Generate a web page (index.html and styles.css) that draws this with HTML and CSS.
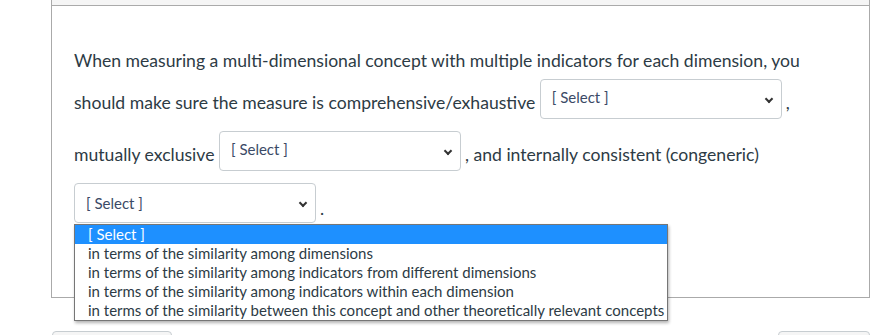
FILE: index.html
```html
<!DOCTYPE html>
<html lang="en">
<head>
    <meta charset="UTF-8">
    <title>Quiz question</title>
    <link rel="stylesheet" href="styles.css">
</head>
<body>
    <div class="question">
        <div class="question-header"></div>
        <div class="question-text">
            <p>
                When measuring a multi-dimensional concept with multiple indicators for each dimension, you<br />
                should make sure the measure is comprehensive/exhaustive
                <span class="select">[ Select ]<span class="chevron"></span></span>,<br />
                mutually exclusive
                <span class="select">[ Select ]<span class="chevron"></span></span>, and internally consistent (congeneric)<br />
                <span class="select select-open">
                    [ Select ]<span class="chevron"></span>
                    <span class="options">
                        <span class="option selected">[ Select ]</span>
                        <span class="option">in terms of the similarity among dimensions</span>
                        <span class="option">in terms of the similarity among indicators from different dimensions</span>
                        <span class="option">in terms of the similarity among indicators within each dimension</span>
                        <span class="option">in terms of the similarity between this concept and other theoretically relevant concepts</span>
                    </span>
                </span>.
            </p>
        </div>
    </div>

    <div class="nav">
        <span class="btn btn-prev"></span>
        <span class="btn btn-next"></span>
    </div>
</body>
</html>
```

FILE: styles.css
```css
body{
    margin:0;
    background:#fff;
    font-family:Lato, 'Open Sans', sans-serif;
    color:#2d3b45;
}

.question{
    margin:0 15px 0 51px;
    border:1px solid #aaa;
    border-top:none;
    height:297px;
}

.question-header{
    height:5px;
    background:#f5f5f5;
    border-bottom:1px solid #aaa;
}

.question-text{
    padding:43px 22px 0 22px;
}

.question-text p{
    margin:0;
    font-size:17.6px;
    line-height:24px;
    white-space:nowrap;
}

.select{
    display:inline-block;
    position:relative;
    box-sizing:border-box;
    width:242px;
    height:40px;
    margin:6px 4px 6px 0;
    padding:7px 11px 0 11px;
    vertical-align:6px;
    border:1px solid #c7cdd1;
    border-radius:4px;
    background:#fff;
    font-size:15px;
    line-height:20px;
    color:#3b4a66;
}

.chevron{
    position:absolute;
    right:9px;
    top:16px;
    width:4px;
    height:4px;
    border-right:2px solid #333;
    border-bottom:2px solid #333;
    transform:rotate(45deg);
}

.select-open{
    padding-top:9px;
}

.options{
    position:absolute;
    left:-1px;
    top:40px;
    width:592px;
    background:#fff;
    border:1px solid #767676;
    box-shadow:1px 2px 3px rgba(0,0,0,0.3);
    z-index:2;
}

.option{
    display:block;
    height:19px;
    padding-left:13px;
    font-size:15px;
    line-height:18px;
    color:#2d3b45;
    white-space:nowrap;
}

.option.selected{
    background:#1e90ff;
    color:#fff;
}

.nav{
    display:flex;
    justify-content:space-between;
    margin:33px 15px 0 52px;
}

.btn{
    display:inline-block;
    height:30px;
    border:1px solid #c7cdd1;
    border-radius:4px;
    background:#f5f5f5;
}

.btn-prev{
    width:118px;
}

.btn-next{
    width:90px;
}
```
